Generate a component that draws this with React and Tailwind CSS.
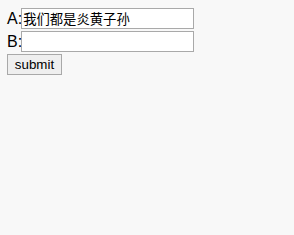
export default function App() {
  return (
    <div className="min-h-[235px] bg-[#f8f8f8] pt-[7px] pl-[7px] text-black" style={{ fontFamily: '"Liberation Sans", "Noto Sans CJK SC", sans-serif' }}>
      <form className="flex flex-col items-start">
        <div className="flex items-center h-[23px] text-[16px] leading-none">
          <span>A:</span>
          <input
            type="text"
            defaultValue="我们都是炎黄子孙"
            className="-ml-[1px] w-[173px] h-[21px] border border-[#a9a9a9] bg-white px-[1px] text-[13.33px] outline-none"
          />
        </div>
        <div className="flex items-center h-[23px] text-[16px] leading-none">
          <span>B:</span>
          <input
            type="text"
            className="-ml-[1px] w-[173px] h-[21px] border border-[#a9a9a9] bg-white px-[1px] text-[13.33px] outline-none"
          />
        </div>
        <button
          type="button"
          className="mt-[1px] h-[21px] w-[55px] border border-[#a9a9a9] bg-[#efefef] text-[13.33px] leading-none"
        >
          submit
        </button>
      </form>
    </div>
  );
}
